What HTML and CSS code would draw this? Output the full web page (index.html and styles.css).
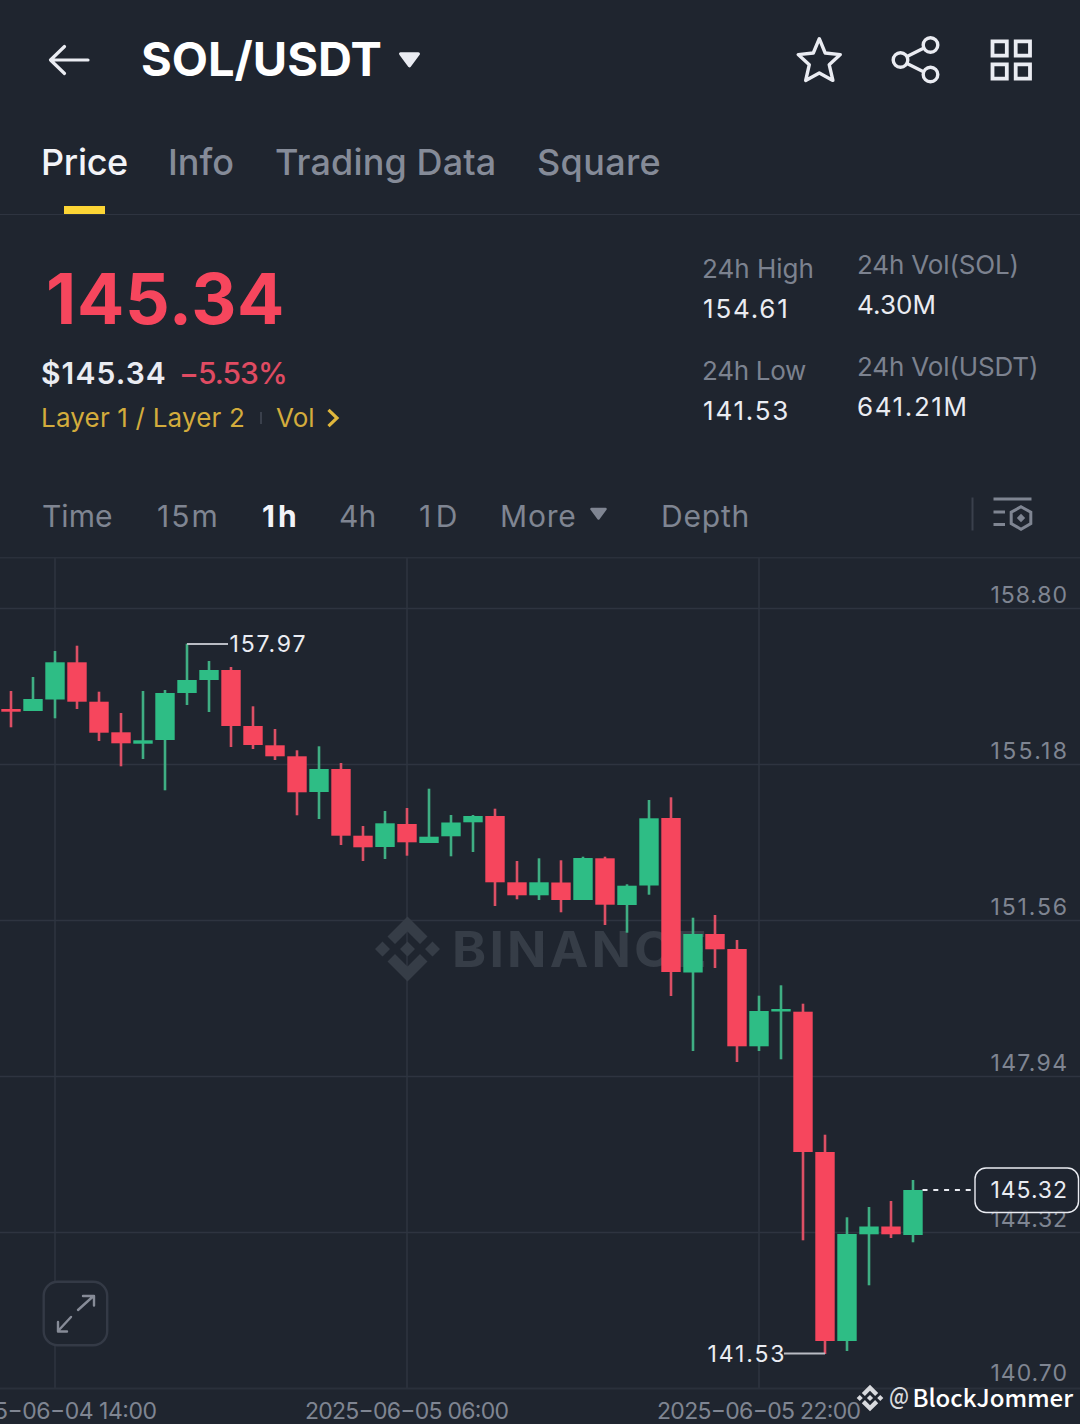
FILE: index.html
```html
<!DOCTYPE html>
<html lang="en">
<head>
<meta charset="utf-8">
<title>SOL/USDT</title>
<link rel="stylesheet" href="styles.css">
</head>
<body>
<main class="screen">
  <header class="topbar">
    <svg class="back" viewBox="0 0 44 34" width="44" height="34"><path d="M17.5 3.5 3.5 17 17.500 30.500M3.500 17H41"/></svg>
    <h1 class="pair">SOL/USDT</h1>
    <svg class="caret" viewBox="0 0 22 17" width="23" height="18"><path d="M2.500 2.500H19.500L11 14Z"/></svg>
    <div class="actions">
      <svg viewBox="0 0 50 50" width="50" height="50"><path d="M25.300 3.700 31.200 18 46.300 19.600 35.200 29.700 38.900 45.400 25.300 38 11.700 45.400 15.300 29.700 4.200 19.600 19.300 18Z"/></svg>
      <svg viewBox="0 0 50 50" width="50" height="50"><circle cx="10.500" cy="25" r="7.300"/><circle cx="40.500" cy="10" r="7.300"/><circle cx="40.500" cy="39.500" r="7.300"/><path d="M17 21.500 34 13M17 28.500 34 37"/></svg>
      <svg class="grid-icon" viewBox="0 0 50 50" width="50" height="50"><path d="M6.500 6.300H20.800V20.600H6.500ZM29.700 6.300H44V20.600H29.700ZM6.500 29.400H20.800V43.700H6.500ZM29.700 29.400H44V43.700H29.700Z"/></svg>
    </div>
  </header>

  <nav class="tabs">
    <a class="tab active">Price</a>
    <a class="tab">Info</a>
    <a class="tab trading">Trading Data</a>
    <a class="tab square">Square</a>
  </nav>

  <section class="summary">
    <div class="quote">
      <div class="last">145.34</div>
      <div class="fiat"><span class="usd">$145.34</span><span class="change">−5.53%</span></div>
      <div class="tags"><span class="layer">Layer 1 / Layer 2</span><i></i><span>Vol</span><svg viewBox="0 0 14 20" width="14" height="20"><path d="M2.500 1.800 11 10 2.500 18.200"/></svg></div>
    </div>
    <dl class="stats left">
      <dt>24h High</dt><dd>154.61</dd>
      <dt class="low">24h Low</dt><dd>141.53</dd>
    </dl>
    <dl class="stats right">
      <dt>24h Vol(SOL)</dt><dd class="base">4.30M</dd>
      <dt>24h Vol(USDT)</dt><dd>641.21M</dd>
    </dl>
  </section>

  <nav class="intervals">
    <span>Time</span><span class="spaced">15m</span><span class="spaced on">1h</span><span>4h</span><span class="spaced day">1D</span>
    <span class="more"><span class="word">More</span><svg viewBox="0 0 18 14" width="19" height="14"><path d="M2 2H16L9 11.500Z"/></svg></span>
    <span class="word">Depth</span>
    <svg class="settings" viewBox="0 0 64 36" width="64" height="36"><path class="rule" d="M2.500 1.500V34.500"/><path d="M23.500 3H61.500M23.500 16H35M23.500 28.600H35M51 10.800 60.800 16.200V27.600L51 33.200 41.200 27.600V16.200Z"/><path class="dot" d="M51 17.800 55.200 22 51 26.200 46.800 22Z"/></svg>
  </nav>

  <svg class="chart" viewBox="0 557 1080 867" width="1080" height="867">
    <g class="gridlines">
      <path class="strong" d="M0 557.500H1080M0 1388.500H1080M55 558V1388M407 558V1388M759 558V1388"/>
      <path d="M0 608.500H1080M0 764.500H1080M0 920.500H1080M0 1076.500H1080M0 1232.500H1080"/>
    </g>
    <g class="watermark">
      <path transform="translate(407.500 949)" d="M0-32.500 20-12.500 12.500-5 0-17.500-12.500-5-20-12.500ZM0 32.500 20 12.500 12.500 5 0 17.500-12.500 5-20 12.500ZM0-7.500 7.500 0 0 7.500-7.500 0ZM-25-7.500-17.500 0-25 7.500-32.500 0ZM25-7.500 32.500 0 25 7.500 17.500 0Z"/>
      <text x="452" y="967" textLength="258" lengthAdjust="spacingAndGlyphs">BINANCE</text>
    </g>
    <g id="candles"></g>
    <path class="callout" d="M187 644H228M784 1353.500H825"/>
    <g class="axis">
      <text x="990.500" y="603" textLength="76.500">158.80</text>
      <text x="990.500" y="759" textLength="76.500">155.18</text>
      <text x="990.500" y="915" textLength="76.500">151.56</text>
      <text x="990.500" y="1071" textLength="76.500">147.94</text>
      <text x="990.500" y="1227" textLength="76.500">144.32</text>
      <text x="990.500" y="1381" textLength="76.500">140.70</text>
      <text x="-47" y="1419" textLength="204">2025−06−04 14:00</text>
      <text x="305" y="1419" textLength="204">2025−06−05 06:00</text>
      <text x="657" y="1419" textLength="204">2025−06−05 22:00</text>
    </g>
    <g class="current">
      <path class="dash" d="M922.500 1190H975"/>
      <rect x="975" y="1168" width="103.500" height="44.500" rx="11"/>
      <text x="990.500" y="1198" textLength="76.500">145.32</text>
      <text x="229.500" y="652" textLength="76">157.97</text>
      <text x="707.500" y="1362" textLength="77">141.53</text>
    </g>
    <g class="expand">
      <rect x="43.700" y="1281.700" width="63.500" height="63.500" rx="14"/>
      <path d="M78 1310 93.500 1296M83 1296H94V1305.500M71 1317 58.500 1330.500M58 1322V1331.500H67"/>
    </g>
    <g class="credit">
      <path transform="translate(870 1398) scale(.41)" d="M0-32.500 20-12.500 12.500-5 0-17.500-12.500-5-20-12.500ZM0 32.500 20 12.500 12.500 5 0 17.500-12.500 5-20 12.500ZM0-7.500 7.500 0 0 7.500-7.500 0ZM-25-7.500-17.500 0-25 7.500-32.500 0ZM25-7.500 32.500 0 25 7.500 17.500 0Z"/>
      <text class="at" x="889" y="1405" textLength="20" lengthAdjust="spacingAndGlyphs">@</text>
      <text x="912.500" y="1407" textLength="160.500">BlockJommer</text>
    </g>
  </svg>
</main>
<script src="chart.js"></script>
</body>
</html>
```
FILE: styles.css
```css
* { box-sizing: border-box; }
body {
  margin: 0;
  background: #1f252f;
  color: #eaecf2;
  font-family: Inter, "Liberation Sans", sans-serif;
}
.screen { width: 1080px; height: 1424px; overflow: hidden; }
h1, dl, dd { margin: 0; font-weight: inherit; }

.topbar { display: flex; align-items: center; height: 119px; padding: 0 44px 0 47px; }
.back { fill: none; stroke: #eaecf2; stroke-width: 3.2; stroke-linecap: round; stroke-linejoin: round; }
.pair { margin: -2px 0 0 50px; width: 257px; font-size: 47px; font-weight: 650; line-height: 60px; color: #fff; white-space: nowrap; }
.caret { fill: #eaecf2; stroke: #eaecf2; stroke-width: 3; stroke-linejoin: round; }
.actions { display: flex; gap: 46px; margin-left: auto; }
.actions svg { fill: none; stroke: #eaecf2; stroke-width: 3.4; stroke-linejoin: round; }
.actions .grid-icon { stroke-width: 3.800; stroke-linejoin: miter; }

.tabs {
  display: grid;
  grid-template-columns: 127px 107px 262px 1fr;
  height: 96px;
  padding-left: 41px;
  border-bottom: 1px solid #2e3440;
  font-size: 36px;
  font-weight: 450;
  line-height: 87px;
  color: #858b98;
  white-space: nowrap;
}
.tab.active { position: relative; color: #f3f4f8; font-weight: 500; letter-spacing: -.3px; }
.tab.trading { letter-spacing: .13px; }
.tab.square { letter-spacing: .35px; }
.tab.active::after { content: ""; position: absolute; left: 23px; bottom: 0; width: 41px; height: 8px; background: #fcd535; }

.summary { display: grid; grid-template-columns: 661px 155px 1fr; height: 258px; padding-left: 41px; white-space: nowrap; }
.quote { padding-top: 43px; }
.last { padding-left: 5px; font-size: 70px; font-weight: 700; line-height: 82px; letter-spacing: .7px; color: #f6465d; }
.fiat { display: flex; font-size: 30px; line-height: 66px; }
.usd { width: 138px; font-weight: 600; letter-spacing: 1.1px; }
.change { color: #e04b62; font-weight: 500; letter-spacing: -1px; }
.tags { display: flex; align-items: center; font-size: 26px; line-height: 26px; margin-top: -1px; color: #d3ac3c; }
.layer { letter-spacing: .18px; }
.tags i { width: 2px; height: 12px; margin: 0 14px 0 15px; background: #3a404c; }
.tags svg { margin-left: 11px; fill: none; stroke: #e0b73c; stroke-width: 3.200; }
.stats { font-size: 26px; line-height: 40px; }
.stats.left { padding-top: 34px; }
.stats.right { padding-top: 30.400px; }
.stats dt { color: #7c828f; }
.stats dt.low { letter-spacing: -.3px; }
.stats.right dt { letter-spacing: -.15px; }
.stats dd { color: #eaecf2; margin-bottom: 22px; letter-spacing: 1.8px; }
.stats.left dd { padding-left: 1px; }
.stats.right dd { letter-spacing: 1.600px; }
.stats.right .base { letter-spacing: .1px; }

.intervals {
  display: grid;
  grid-template-columns: 114px 106px 77px 79px 82px 161px 309px auto;
  align-items: center;
  justify-content: start;
  height: 84px;
  padding-left: 42px;
  font-size: 30px;
  line-height: 86px;
  color: #7f8592;
}
.intervals .spaced { padding-left: 1px; letter-spacing: 2px; }
.intervals .day { letter-spacing: 4.5px; }
.intervals .on { padding-left: 0; color: #f3f4f8; font-weight: 650; letter-spacing: 3px; }
.intervals .word { letter-spacing: .8px; }
.more { display: flex; align-items: center; gap: 12px; }
.more svg { margin-top: -4px; fill: #7f8592; stroke: #7f8592; stroke-width: 2.500; stroke-linejoin: round; }
.settings { margin-top: -5px; fill: none; stroke: #7f8592; stroke-width: 3; }
.settings .rule { stroke: #3a404c; stroke-width: 2; }
.settings .dot { fill: #7f8592; stroke: none; }

.chart { display: block; font-size: 23px; }
.gridlines { fill: none; stroke: #2e3440; stroke-width: 1.300; }
.gridlines .strong { stroke: #2a303b; stroke-width: 2; }
.watermark { fill: #363d47; font-size: 49px; font-weight: 700; letter-spacing: 3px; }
.body-up { fill: #2ebd85; }
.body-down { fill: #f6465d; }
.wick-up { fill: #3fae83; }
.wick-down { fill: #dc4f65; }
.callout { stroke: #b9bcc4; stroke-width: 1.800; }
.axis { fill: #7f8592; }
.current { fill: #eaecf2; }
.current rect { fill: #1f252f; fill-opacity: .85; stroke: #eaecf2; stroke-width: 1.400; }
.dash { stroke: #eaecf2; stroke-width: 1.800; stroke-dasharray: 5 5.800; }
.expand { fill: none; stroke: #868b97; stroke-width: 2.400; stroke-linecap: round; stroke-linejoin: round; }
.expand rect { fill: #1f252f; stroke: #343a46; stroke-width: 2.400; }
.credit { fill: #fff; font-family: "Noto Sans CJK SC", "Noto Sans", sans-serif; font-size: 24px; font-weight: 500; }
.credit path, .credit .at { fill: #d8dade; }
```
FILE: chart.js
```js
// [direction, high, bodyTop, bodyBottom, low] in chart coordinates
const candles = [
  ["down", 691, 709, 711.7, 727.3], ["up", 677, 699, 711, 711], ["up", 651, 662.3, 699.5, 718.3],
  ["down", 645.7, 662.3, 701.7, 709], ["down", 691.7, 701.7, 732.7, 741], ["down", 713, 732.3, 743.3, 766.3],
  ["up", 691, 740.3, 743.7, 759], ["up", 690, 693, 740, 790.3], ["up", 643.7, 680, 693, 705],
  ["up", 661, 670, 680, 712], ["down", 667, 670, 726, 747], ["down", 706.3, 726, 745, 749],
  ["down", 729, 745.3, 756.3, 760], ["down", 750.3, 756.3, 792.3, 815.3], ["up", 746.3, 769, 792, 819],
  ["down", 763, 769, 835.7, 845], ["down", 826, 835.7, 847.3, 861], ["up", 811, 823.3, 847, 859],
  ["down", 808, 824, 842.3, 855.7], ["up", 788.7, 836.7, 843, 843], ["up", 815, 822.5, 836.3, 856.3],
  ["up", 815, 816, 822.3, 852], ["down", 808.7, 816, 882.3, 906], ["down", 861, 882.3, 895.3, 899.3],
  ["up", 858.3, 882.3, 895.3, 900], ["down", 860.3, 882.5, 900, 912.3], ["up", 856.7, 858, 900, 900],
  ["down", 856.7, 858.3, 904.7, 925], ["up", 884.3, 885.7, 905, 932.7], ["up", 800, 818.3, 885.5, 894.7],
  ["down", 797.3, 818, 972, 996], ["up", 917.7, 934, 972.5, 1051], ["down", 915, 934, 949.3, 968],
  ["down", 940, 949, 1046.3, 1062], ["up", 995.7, 1011, 1046.3, 1051], ["up", 985.3, 1009, 1011.5, 1059.3],
  ["down", 1003.7, 1011.7, 1152, 1240.3], ["down", 1134.7, 1152, 1341, 1354], ["up", 1217.3, 1234, 1341, 1351],
  ["up", 1207, 1226.5, 1234.3, 1285.3], ["down", 1201, 1226.5, 1234.3, 1238], ["up", 1180, 1190, 1235, 1242.3],
];
const rect = (cls, x, y, w, h) => `<rect class="${cls}" x="${x}" y="${y}" width="${w}" height="${h}"/>`;
document.getElementById("candles").innerHTML = candles.map(([dir, high, top, bottom, low], i) => {
  const x = 11 + 22 * i;
  return rect(`wick-${dir}`, x - 1.3, high, 2.6, low - high) + rect(`body-${dir}`, x - 9.7, top, 19.4, bottom - top);
}).join("");
```
